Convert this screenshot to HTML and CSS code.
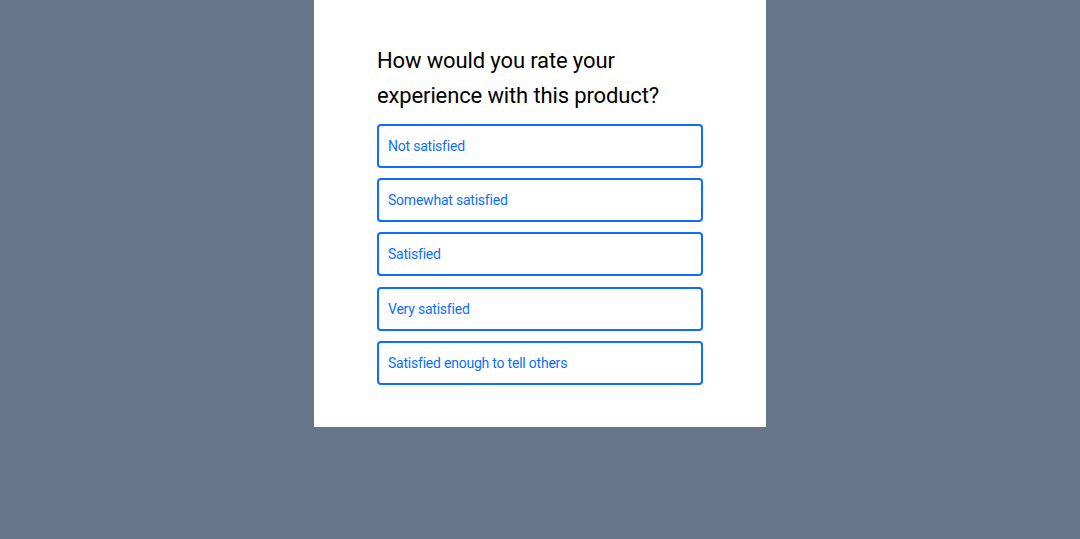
FILE: index.html
```html
<!DOCTYPE html>
<html lang="en">
<head>
<meta charset="utf-8">
<title>Rating</title>
<link rel="stylesheet" href="styles.css">
</head>
<body>
<main class="card">
  <h1 class="question">How would you rate your experience with this product?</h1>
  <div class="options">
    <button class="option">Not satisfied</button>
    <button class="option">Somewhat satisfied</button>
    <button class="option">Satisfied</button>
    <button class="option">Very satisfied</button>
    <button class="option">Satisfied enough to tell others</button>
  </div>
</main>
</body>
</html>
```
FILE: styles.css
```css
html, body {
  margin: 0;
  padding: 0;
  height: 100%;
}
body {
  background: #667589;
  font-family: Roboto, "Liberation Sans", Arial, sans-serif;
}
.card {
  width: 326px;
  margin: 0 auto;
  background: #ffffff;
  padding: 43px 63px 42px;
  box-sizing: content-box;
}
.question {
  margin: 0 0 10.7px;
  font-size: 22px;
  line-height: 35px;
  font-weight: 400;
  letter-spacing: -0.13px;
  color: #000000;
}
.options {
  display: flex;
  flex-direction: column;
  gap: 10.33px;
}
.option {
  display: block;
  width: 100%;
  height: 44px;
  box-sizing: border-box;
  border: 2px solid #0d6efd;
  border-radius: 4px;
  background: #ffffff;
  color: #0d6efd;
  font-family: Roboto, "Liberation Sans", Arial, sans-serif;
  font-size: 14px;
  line-height: 20px;
  letter-spacing: -0.22px;
  padding: 10px 9px;
  text-align: left;
  cursor: pointer;
}
```
